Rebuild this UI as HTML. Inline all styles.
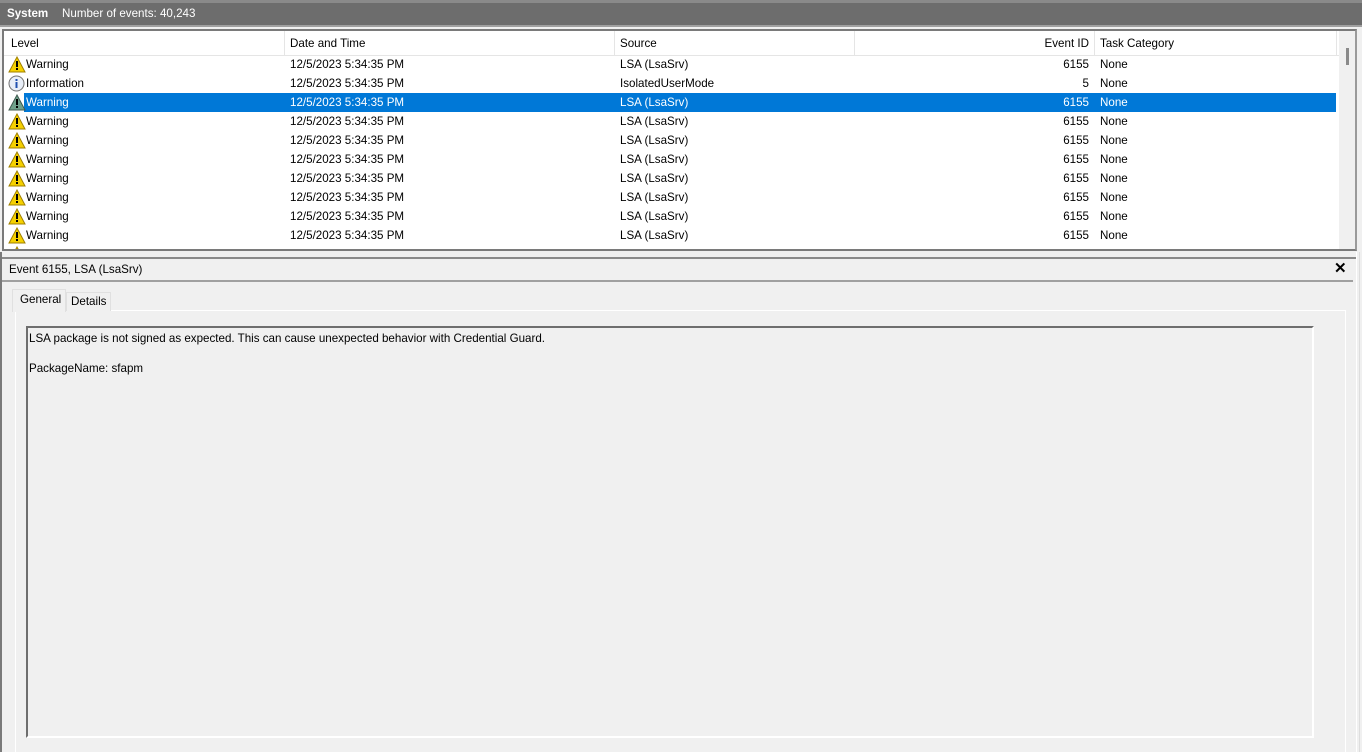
<!DOCTYPE html>
<html><head><meta charset="utf-8"><style>
*{margin:0;padding:0;box-sizing:border-box}
html,body{width:1362px;height:752px;overflow:hidden}
body{background:#f0f0f0;font-family:"Liberation Sans",sans-serif;font-size:11.6px;color:#000;position:relative}
.abs{position:absolute}
.top{left:0;top:0;width:1362px;height:27px;background:#6d6d6d;border-top:3px solid #8a8a8a;border-bottom:2px solid #a0a0a0;color:#fff}
.list{left:2px;top:29px;width:1355px;height:222px;background:#fff;border:2px solid #7a7a7a;border-right-color:#9a9a9a}
.hdr{height:25px;border-bottom:1px solid #e5e5e5;position:relative}
.hdr span,.row span{position:absolute;top:6px;white-space:nowrap}
.sep{position:absolute;top:0;width:1px;height:24px;background:#e5e5e5}
.row{position:absolute;left:0;width:1332px;height:19px}
.row span{top:3px}
.sel{background:#0078d7;color:#fff}
.ico{position:absolute;left:4px;top:1px}
</style></head><body>
<div class="abs top"><span class="abs" style="left:7px;top:4px;font-weight:bold">System</span><span class="abs" style="left:62px;top:4px">Number of events: 40,243</span></div>
<div class="abs list">
<div class="hdr">
<span style="left:7px">Level</span><span style="left:286px">Date and Time</span><span style="left:616px">Source</span><span style="right:266px">Event ID</span><span style="left:1096px">Task Category</span>
<div class="sep" style="left:280px"></div><div class="sep" style="left:610px"></div><div class="sep" style="left:850px"></div><div class="sep" style="left:1090px"></div><div class="sep" style="left:1332px"></div>
</div>
<div class="abs" style="left:1335px;top:0;width:16px;height:218px;background:#f0f0f0"></div>
<div class="abs" style="left:1342px;top:17px;width:3px;height:17px;background:#8a8a8a"></div>
<div id="rows"></div>
</div>
<div class="abs" style="left:2px;top:257px;width:1355px;height:2px;background:#8a8a8a"></div>
<div class="abs" style="left:0;top:252px;width:2px;height:500px;background:#7a7a7a"></div>
<div class="abs" style="left:1356px;top:252px;width:1px;height:500px;background:#fff"></div>
<div class="abs" style="left:1359px;top:252px;width:1px;height:500px;background:#ddd"></div>
<span class="abs" style="left:9px;top:263px">Event 6155, LSA (LsaSrv)</span>
<span class="abs" style="left:1334px;top:259px;font-weight:bold;font-size:15px">✕</span>
<div class="abs" style="left:2px;top:280px;width:1351px;height:2px;background:#a0a0a0"></div>
<div class="abs" style="left:15px;top:310px;width:1331px;height:442px;border:1px solid #fff;border-bottom:none;background:#f0f0f0"></div>
<div class="abs" style="left:12px;top:289px;width:54px;height:23px;border:1px solid #e0e0e0;border-bottom:none;background:#f0f0f0"><span class="abs" style="left:7px;top:3px">General</span></div>
<div class="abs" style="left:66px;top:292px;width:45px;height:19px;border:1px solid #e0e0e0;border-bottom:none;background:#f0f0f0"><span class="abs" style="left:4px;top:2px">Details</span></div>
<div class="abs" style="left:26px;top:326px;width:1288px;height:412px;border-top:2px solid #6e6e6e;border-left:2px solid #6e6e6e;border-right:2px solid #fff;border-bottom:2px solid #fff;background:#f0f0f0">
<div style="position:absolute;left:1px;top:4px">LSA package is not signed as expected. This can cause unexpected behavior with Credential Guard.</div>
<div style="position:absolute;left:1px;top:34px">PackageName: sfapm</div>
</div>
<script>
var warn='<svg class="ico" width="18" height="17" viewBox="0 0 18 17"><path d="M9 1 L17 16 L1 16 Z" fill="#f5d000" stroke="#a08000" stroke-width="1"/><rect x="8" y="5" width="2" height="6" fill="#000"/><rect x="8" y="12" width="2" height="2" fill="#000"/></svg>';
var selwarn='<svg class="ico" width="18" height="17" viewBox="0 0 18 17"><path d="M9 1 L17 16 L1 16 Z" fill="#6fa08a" stroke="#405a50" stroke-width="1"/><rect x="8" y="5" width="2" height="6" fill="#000"/><rect x="8" y="12" width="2" height="2" fill="#000"/></svg>';
var info='<svg class="ico" width="17" height="17" viewBox="0 0 17 17"><circle cx="8.5" cy="8.5" r="7.5" fill="#e8eef8" stroke="#707070"/><rect x="7.5" y="7" width="2" height="6" fill="#2050b0"/><rect x="7.5" y="4" width="2" height="2" fill="#2050b0"/></svg>';
var h='';
for(var i=0;i<10;i++){
 var isInfo=i==1, sel=i==2;
 var t=24+i*19;
 h+='<div class="row'+(sel?' sel':'')+'" style="top:'+t+'px;'+(sel?'left:20px;width:1312px;':'')+'">';
 var o=sel?-20:0;
 h+=(sel?'':(isInfo?info:warn));
 h+='<span style="left:'+(22+o)+'px">'+(isInfo?'Information':'Warning')+'</span>';
 h+='<span style="left:'+(286+o)+'px">12/5/2023 5:34:35 PM</span>';
 h+='<span style="left:'+(616+o)+'px">'+(isInfo?'IsolatedUserMode':'LSA (LsaSrv)')+'</span>';
 h+='<span style="right:'+(247)+'px">'+(isInfo?'5':'6155')+'</span>';
 h+='<span style="left:'+(1096+o)+'px">None</span></div>';
 if(sel) h+='<div class="row" style="top:'+t+'px;width:20px">'+selwarn+'</div>';
}
h+='<div class="row" style="top:214px;height:4px;overflow:hidden">'+warn+'</div>';
document.getElementById('rows').innerHTML=h;
</script>
</body></html>
